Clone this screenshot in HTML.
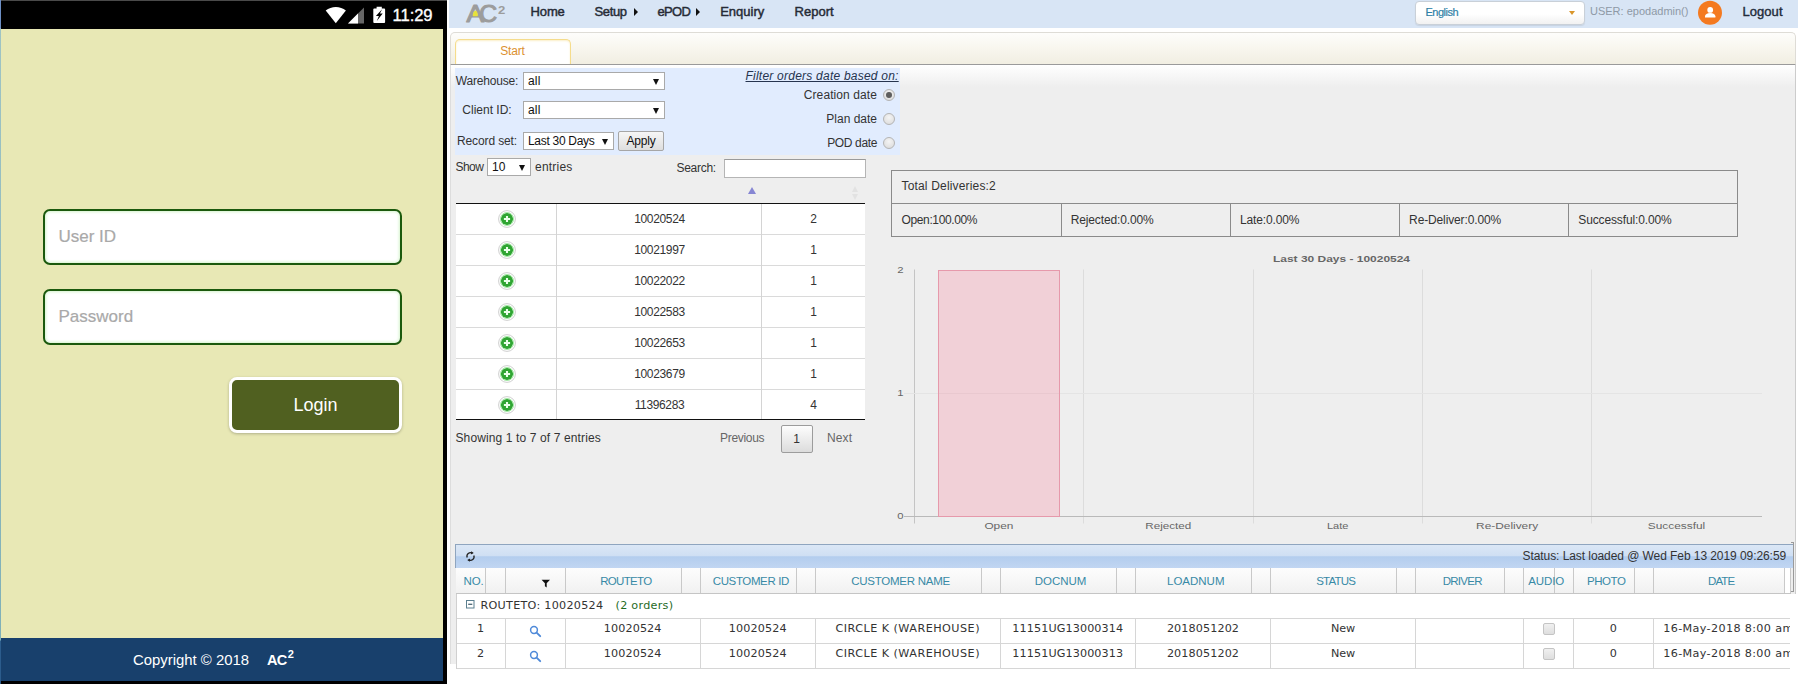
<!DOCTYPE html>
<html lang="en">
<head>
<meta charset="utf-8">
<title>AC2 ePOD</title>
<style>
html,body{margin:0;padding:0}
button{margin:0;padding:0;font-family:inherit;box-sizing:content-box;display:block;cursor:pointer;outline:0}
body{width:1799px;height:684px;position:relative;overflow:hidden;background:#fff;font-family:"Liberation Sans",sans-serif;color:#333}
.abs,.t{position:absolute}
.t{white-space:nowrap;line-height:14px;font-size:12px;letter-spacing:0;color:#333}
/* ---------- mobile panel ---------- */
#mob{position:absolute;left:0;top:0;width:447px;height:684px;background:#000;overflow:hidden}
#mob .screen{position:absolute;left:1px;top:28.5px;width:442.1px;height:609px;background:#e8e8b5}
#mob .ledge{position:absolute;left:0;top:0;width:1px;height:684px;background:linear-gradient(#6d8fc5 0,#6d8fc5 28px,#9fc4c4 29px,#7fb0b8 640px,#2c5c8c 641px)}
#mob .topline{position:absolute;left:0;top:0;width:447px;height:1px;background:#4a4a4a}
#mob .clock{position:absolute;left:392.5px;top:6.3px;font-size:16.6px;line-height:19px;color:#fff;letter-spacing:-.05px;-webkit-text-stroke:.35px #fff}
.inp{position:absolute;left:43px;width:355px;height:52px;border:2px solid #1b590d;border-radius:7px;background:#fff;box-shadow:inset 0 0 3px 1px #d5f3cd}
.inp span{position:absolute;left:13.5px;top:16.4px;-webkit-text-stroke:.2px #a9a9a9;font-size:17px;line-height:20px;color:#a9a9a9}
#login{position:absolute;left:229px;top:377px;width:167px;height:49.5px;border:3px solid #fff;border-radius:8px;background:#506020;box-shadow:0 1px 3px rgba(0,0,0,.25);color:#fff;font-size:18px;line-height:50.5px;text-align:center}
#foot{position:absolute;left:1px;top:637.5px;width:441.7px;height:43px;background:#18406c}
#foot .c{position:absolute;left:132px;top:13px;font-size:14.9px;line-height:18px;color:#fff;white-space:nowrap}
#foot .b{position:absolute;left:266px;top:13px;font-size:14.5px;line-height:18px;color:#fff;font-weight:bold;white-space:nowrap;letter-spacing:-.6px}
#foot .b sup{font-size:11px;line-height:0;position:relative;top:-1px;vertical-align:super;letter-spacing:0;margin-left:1px}

/* ---------- web app ---------- */
#web{position:absolute;left:447px;top:0;width:1352px;height:684px;background:#fff;overflow:hidden}
#web .in{position:absolute;left:-447px;top:0;width:1799px;height:684px}
#nav{position:absolute;left:449px;top:0;width:1349px;height:27.5px;background:#d8e5f5}
.nv{position:absolute;top:4px;font-size:13px;line-height:16px;font-weight:normal;color:#262b36;-webkit-text-stroke:.45px #262b36;white-space:nowrap;letter-spacing:0}
.tri{position:absolute;width:0;height:0;border-left:4.5px solid #111;border-top:4px solid transparent;border-bottom:4px solid transparent}
#lang{position:absolute;left:1414.5px;top:.8px;width:168px;height:22px;border:1px solid #c9d0d8;border-radius:4px;background:linear-gradient(#fff 0,#fff 55%,#f1f1f1 100%);box-shadow:0 1px 1px rgba(0,0,0,.08)}
#lang span{position:absolute;left:10px;top:3px;font-size:11px;line-height:14px;color:#2e7fa6;letter-spacing:-.5px;-webkit-text-stroke:.2px #2e7fa6}
#lang i{position:absolute;left:153px;top:9.7px;width:0;height:0;border-top:4px solid #d9962b;border-left:3.7px solid transparent;border-right:3.7px solid transparent}
#usr{position:absolute;left:1590px;top:5px;font-size:11px;line-height:13px;color:#8e99a6;white-space:nowrap;letter-spacing:0}
#tabs{position:absolute;left:449.5px;top:31.8px;width:1344.5px;height:31.4px;border:1px solid #dedcd6;border-bottom:1px solid #9a9a9a;border-radius:5px 5px 0 0;background:linear-gradient(#fdfdfb 0,#f8f6ee 50%,#f1eee2 100%);box-sizing:content-box}
#tab1{position:absolute;left:454.5px;top:39px;width:114px;height:24px;border:1px solid #f5dc8c;border-bottom:0;border-radius:5px 5px 0 0;background:#fff;box-shadow:inset 0 1px 2px #fbefc8}
#tab1 span{position:absolute;left:0;width:114px;top:3.5px;text-align:center;font-size:12px;line-height:14px;color:#dc9130;letter-spacing:-.15px}
#panel{position:absolute;left:450px;top:65px;width:1344px;height:598.5px;border-left:1px solid #ddd;border-right:1px solid #ccc;background:linear-gradient(#fff 0,#eee 22px,#eee 100%)}

/* filter area */
#filt{position:absolute;left:454.5px;top:68px;width:445px;height:86.5px;background:#e1ecfe}
.sel{position:absolute;height:16px;border:1px solid #a9a9a9;background:#fff;box-sizing:content-box}
.sel span{position:absolute;left:4px;top:1px;font-size:12px;line-height:14px;color:#111;white-space:nowrap;letter-spacing:.2px}
.sel i{position:absolute;right:5px;top:5.5px;width:0;height:0;border-top:6px solid #111;border-left:3.5px solid transparent;border-right:3.5px solid transparent}
#apply{position:absolute;left:618px;top:131px;width:44px;height:18px;border:1px solid #a6a6a6;border-radius:2px;background:linear-gradient(#f6f6f6,#dedede);box-sizing:content-box}
#apply span{position:absolute;left:0;width:44px;text-align:center;top:2px;font-size:12px;line-height:14px;color:#111;letter-spacing:-.23px}
.rad{position:absolute;width:10px;height:10px;border:1px solid #b4b4b4;border-radius:50%;background:radial-gradient(circle at 50% 35%,#f4f4f4,#d9d9d9);box-sizing:content-box}
.rad.on:after{content:"";position:absolute;left:2.1px;top:2.1px;width:5.8px;height:5.8px;border-radius:50%;background:#5e5e5e}
#srch{position:absolute;left:724px;top:158.5px;width:140px;height:17.5px;border:1px solid #b5b5b5;border-top-color:#9a9a9a;background:#fff;box-sizing:content-box}
/* left table */
#dt{position:absolute;left:456px;top:202.6px;width:409px;height:215.8px;background:#fff;border-top:1.4px solid #111;border-bottom:1.4px solid #111;box-sizing:content-box}
#dt .r{position:absolute;left:0;width:409px;height:0;border-top:1px solid #dadada}
#dt .v{position:absolute;top:0;height:215.8px;width:0;border-left:1px solid #d4d4d4}
#dt .n{position:absolute;font-size:12px;line-height:14px;color:#333;letter-spacing:-.35px;text-align:center}
.plus{position:absolute;width:18px;height:18px}
#pg1{position:absolute;left:780.5px;top:424.5px;width:30px;height:26px;border:1px solid #9c9c9c;border-radius:2px;background:linear-gradient(#fdfdfd,#dcdcdc);box-sizing:content-box}

/* stats + chart */
#st{position:absolute;left:891px;top:170px;width:845px;height:64.7px;border:1px solid #8a8a8a;box-sizing:content-box}
#st .h{position:absolute;left:0;top:32px;width:845px;height:0;border-top:1px solid #8a8a8a}
#st .v{position:absolute;top:32px;height:32.7px;width:0;border-left:1px solid #8a8a8a}
#st span{position:absolute;font-size:12px;line-height:14px;color:#333;white-space:nowrap}

/* grid */
#gtb{position:absolute;left:455px;top:544px;width:1336.5px;height:23px;border:1px solid #8fa5bf;border-bottom:0;background:linear-gradient(#dbe7f6 0,#cfdff3 47%,#b3cdee 51%,#c1d6f2 100%);box-sizing:content-box}
#ghd{position:absolute;left:455.5px;top:568px;width:1335px;height:24.6px;background:linear-gradient(#fdfdfd,#f1f1f1);border-bottom:1px solid #c5c5c5;overflow:hidden}
#ghd u{position:absolute;left:1329.5px;top:0;width:5px;height:25px;background:#fff;border-right:1px solid #c9c9c9}
#ghd i{position:absolute;top:0;height:25px;width:0;border-left:1px solid #c9c9c9}
#ghd span{position:absolute;top:5.5px;font-size:11.5px;line-height:14px;color:#388aa6;white-space:nowrap;text-align:center;letter-spacing:.1px}
#gbd{position:absolute;left:455.5px;top:593.6px;width:1339px;height:75px;background:#fff;border-left:1px solid #d0d0d0;overflow:hidden;font-family:"DejaVu Sans","Liberation Sans",sans-serif}
#gbd i{position:absolute;top:24.5px;height:51px;width:0;border-left:1px solid #d6d6d6}
#gbd b{position:absolute;left:0;width:1334.5px;height:0;border-top:1px solid #d6d6d6}
#gbd span{position:absolute;font-size:11.2px;line-height:14px;color:#333;white-space:nowrap;text-align:center;font-weight:normal;letter-spacing:.1px}
.cb{position:absolute;width:10px;height:10px;border:1px solid #c4c4c4;border-radius:2px;background:linear-gradient(#f0f0f0,#dedede);box-sizing:content-box}
</style>
</head>
<body>
<!-- ================= MOBILE LOGIN ================= -->
<div id="mob">
  <div class="screen"></div>
  <div class="topline"></div>
  <div class="ledge"></div>
  <svg class="abs" style="left:320px;top:2px" width="70" height="26" viewBox="320 2 70 26">
    <!-- wifi -->
    <path d="M335.8 23.2 L325.7 10.6 A16.2 16.2 0 0 1 345.9 10.6 Z" fill="#fff"/>
    <!-- signal -->
    <path d="M348 23.5 L364 7.5 L364 23.5 Z" fill="#666"/>
    <path d="M348 23.5 L358 13.5 L358 23.5 Z" fill="#fff"/>
    <!-- battery -->
    <path d="M376.6 6.7 h5.2 v1.7 h2.4 a.9 .9 0 0 1 .9 .9 v12.8 a.9 .9 0 0 1 -.9 .9 h-10 a.9 .9 0 0 1 -.9 -.9 v-12.8 a.9 .9 0 0 1 .9 -.9 h2.4 Z" fill="#fff"/>
    <path d="M382.1 9.3 L375.9 16.1 H378.9 L376.8 21 L382.7 13.6 H379.9 Z" fill="#000"/>
  </svg>
  <div class="clock">11:29</div>
  <div class="inp" style="top:209px"><span>User ID</span></div>
  <div class="inp" style="top:288.5px"><span>Password</span></div>
  <button id="login" type="button">Login</button>
  <div id="foot"><span class="c">Copyright © 2018</span><span class="b">AC<sup>2</sup></span></div>
</div>

<!-- ================= WEB APP ================= -->
<div id="web"><div class="in">
  <div id="nav"></div>
  <svg class="abs" style="left:462px;top:1.8px" width="50" height="25" viewBox="462 1 50 25" font-family="Liberation Sans, sans-serif">
    <text x="466.6" y="21.2" font-size="23.6" fill="#9c9c9c" stroke="#9c9c9c" stroke-width="1.1" stroke-linejoin="round" textLength="17.6" lengthAdjust="spacingAndGlyphs">A</text>
    <text x="479.2" y="21.2" font-size="23" fill="#9c9c9c" stroke="#9c9c9c" stroke-width="1" stroke-linejoin="round" textLength="18" lengthAdjust="spacingAndGlyphs">C</text>
    <path d="M475.3 9.4c1.3 0 2.5 2.3 2.6 5.3c0 .5-.5 .6-2.6 .6s-2.6-.1-2.6-.6c.1-3 1.3-5.3 2.6-5.3z" fill="#e7e23a"/>
    <text x="498" y="13.4" font-size="11.6" font-weight="bold" fill="#9c9c9c" textLength="7.3" lengthAdjust="spacingAndGlyphs">2</text>
  </svg>
  <span class="nv" style="left:530.6px;letter-spacing:-.15px">Home</span>
  <span class="nv" style="left:594.6px;letter-spacing:-.4px">Setup</span><i class="tri" style="left:633.5px;top:8px"></i>
  <span class="nv" style="left:657.4px;letter-spacing:-.65px">ePOD</span><i class="tri" style="left:696px;top:8px"></i>
  <span class="nv" style="left:720.2px">Enquiry</span>
  <span class="nv" style="left:794.6px">Report</span>
  <div id="lang"><span>English</span><i></i></div>
  <span id="usr">USER: epodadmin()</span>
  <svg class="abs" style="left:1697px;top:0" width="26" height="26" viewBox="1697 0 26 26">
    <circle cx="1710" cy="12.8" r="12" fill="#f47a20"/>
    <circle cx="1710.2" cy="9.9" r="2.9" fill="#fff"/>
    <path d="M1705 17.6 v-1.3 c0-2 2.2-3.3 5.2-3.3 s5.2 1.3 5.2 3.3 v1.3 Z" fill="#fff"/>
  </svg>
  <span class="nv" style="left:1742.5px;font-weight:normal;letter-spacing:.05px;-webkit-text-stroke:.4px #222b3a;color:#222b3a">Logout</span>
  <div id="tabs"></div>
  <div id="tab1"><span>Start</span></div>
  <div id="panel"></div>

  <div id="filt"></div>
  <span class="t" style="left:455px;width:64px;text-align:center;top:74px;letter-spacing:-0.2px">Warehouse:</span>
  <span class="t" style="left:455px;width:64px;text-align:center;top:103px;letter-spacing:0px">Client ID:</span>
  <span class="t" style="left:455px;width:64px;text-align:center;top:134px;letter-spacing:-0.12px">Record set:</span>
  <div class="sel" style="left:523px;top:72px;width:140px"><span>all</span><i></i></div>
  <div class="sel" style="left:523px;top:101px;width:140px"><span>all</span><i></i></div>
  <div class="sel" style="left:523px;top:132px;width:89px"><span style="letter-spacing:-.3px">Last 30 Days</span><i></i></div>
  <button id="apply" type="button"><span>Apply</span></button>
  <span class="t" style="left:745.5px;top:68.5px;font-style:italic;text-decoration:underline;color:#26344f;letter-spacing:0.23px">Filter orders date based on:</span>
  <span class="t" style="left:777px;width:100px;text-align:right;top:88px;letter-spacing:0.09px">Creation date</span>
  <span class="t" style="left:777px;width:100px;text-align:right;top:112px;letter-spacing:0px">Plan date</span>
  <span class="t" style="left:777px;width:100px;text-align:right;top:136px;letter-spacing:-0.36px">POD date</span>
  <div class="rad on" style="left:883px;top:89.2px"></div>
  <div class="rad" style="left:883px;top:113.2px"></div>
  <div class="rad" style="left:883px;top:137.3px"></div>
  <span class="t" style="left:455.5px;top:160px;letter-spacing:-0.55px">Show</span>
  <div class="sel" style="left:487px;top:158px;width:42px"><span>10</span><i></i></div>
  <span class="t" style="left:535px;top:160px;letter-spacing:0.22px">entries</span>
  <span class="t" style="left:676.5px;top:161px;letter-spacing:-0.28px">Search:</span>
  <div id="srch"></div>
  <i class="abs" style="left:748px;top:187px;width:0;height:0;border-bottom:7px solid #8686d3;border-left:4.2px solid transparent;border-right:4.2px solid transparent"></i>
  <i class="abs" style="left:852px;top:186px;width:0;height:0;border-bottom:6px solid #e2e2e2;border-left:3.5px solid transparent;border-right:3.5px solid transparent"></i>
  <i class="abs" style="left:852px;top:194px;width:0;height:0;border-top:6px solid #e2e2e2;border-left:3.5px solid transparent;border-right:3.5px solid transparent"></i>
  <div id="dt">
    <svg class="plus" style="left:42px;top:6.8px" viewBox="0 0 18 18"><circle cx="9" cy="9" r="8.4" fill="#fff" stroke="#c9c9c9" stroke-width=".9"/><circle cx="9" cy="9" r="6.1" fill="#2fa532"/><circle cx="9" cy="9" r="6.6" fill="none" stroke="#9fe8a0" stroke-width=".9"/><path d="M9 5.9v6.2M5.9 9h6.2" stroke="#eaffea" stroke-width="2.1"/></svg>
    <span class="n" style="left:101px;width:205px;top:8px">10020524</span><span class="n" style="left:306px;width:103px;top:8px">2</span>
    <div class="r" style="top:30.0px"></div>
    <svg class="plus" style="left:42px;top:37.8px" viewBox="0 0 18 18"><circle cx="9" cy="9" r="8.4" fill="#fff" stroke="#c9c9c9" stroke-width=".9"/><circle cx="9" cy="9" r="6.1" fill="#2fa532"/><circle cx="9" cy="9" r="6.6" fill="none" stroke="#9fe8a0" stroke-width=".9"/><path d="M9 5.9v6.2M5.9 9h6.2" stroke="#eaffea" stroke-width="2.1"/></svg>
    <span class="n" style="left:101px;width:205px;top:39px">10021997</span><span class="n" style="left:306px;width:103px;top:39px">1</span>
    <div class="r" style="top:61.0px"></div>
    <svg class="plus" style="left:42px;top:68.8px" viewBox="0 0 18 18"><circle cx="9" cy="9" r="8.4" fill="#fff" stroke="#c9c9c9" stroke-width=".9"/><circle cx="9" cy="9" r="6.1" fill="#2fa532"/><circle cx="9" cy="9" r="6.6" fill="none" stroke="#9fe8a0" stroke-width=".9"/><path d="M9 5.9v6.2M5.9 9h6.2" stroke="#eaffea" stroke-width="2.1"/></svg>
    <span class="n" style="left:101px;width:205px;top:70px">10022022</span><span class="n" style="left:306px;width:103px;top:70px">1</span>
    <div class="r" style="top:92.0px"></div>
    <svg class="plus" style="left:42px;top:99.8px" viewBox="0 0 18 18"><circle cx="9" cy="9" r="8.4" fill="#fff" stroke="#c9c9c9" stroke-width=".9"/><circle cx="9" cy="9" r="6.1" fill="#2fa532"/><circle cx="9" cy="9" r="6.6" fill="none" stroke="#9fe8a0" stroke-width=".9"/><path d="M9 5.9v6.2M5.9 9h6.2" stroke="#eaffea" stroke-width="2.1"/></svg>
    <span class="n" style="left:101px;width:205px;top:101px">10022583</span><span class="n" style="left:306px;width:103px;top:101px">1</span>
    <div class="r" style="top:123.0px"></div>
    <svg class="plus" style="left:42px;top:130.8px" viewBox="0 0 18 18"><circle cx="9" cy="9" r="8.4" fill="#fff" stroke="#c9c9c9" stroke-width=".9"/><circle cx="9" cy="9" r="6.1" fill="#2fa532"/><circle cx="9" cy="9" r="6.6" fill="none" stroke="#9fe8a0" stroke-width=".9"/><path d="M9 5.9v6.2M5.9 9h6.2" stroke="#eaffea" stroke-width="2.1"/></svg>
    <span class="n" style="left:101px;width:205px;top:132px">10022653</span><span class="n" style="left:306px;width:103px;top:132px">1</span>
    <div class="r" style="top:154.0px"></div>
    <svg class="plus" style="left:42px;top:161.8px" viewBox="0 0 18 18"><circle cx="9" cy="9" r="8.4" fill="#fff" stroke="#c9c9c9" stroke-width=".9"/><circle cx="9" cy="9" r="6.1" fill="#2fa532"/><circle cx="9" cy="9" r="6.6" fill="none" stroke="#9fe8a0" stroke-width=".9"/><path d="M9 5.9v6.2M5.9 9h6.2" stroke="#eaffea" stroke-width="2.1"/></svg>
    <span class="n" style="left:101px;width:205px;top:163px">10023679</span><span class="n" style="left:306px;width:103px;top:163px">1</span>
    <div class="r" style="top:185.0px"></div>
    <svg class="plus" style="left:42px;top:192.8px" viewBox="0 0 18 18"><circle cx="9" cy="9" r="8.4" fill="#fff" stroke="#c9c9c9" stroke-width=".9"/><circle cx="9" cy="9" r="6.1" fill="#2fa532"/><circle cx="9" cy="9" r="6.6" fill="none" stroke="#9fe8a0" stroke-width=".9"/><path d="M9 5.9v6.2M5.9 9h6.2" stroke="#eaffea" stroke-width="2.1"/></svg>
    <span class="n" style="left:101px;width:205px;top:194px">11396283</span><span class="n" style="left:306px;width:103px;top:194px">4</span>
    <div class="v" style="left:100px"></div><div class="v" style="left:305px"></div>
  </div>
  <div id="st"><div class="h"></div><div class="v" style="left:168.7px"></div><div class="v" style="left:337.9px"></div><div class="v" style="left:507.1px"></div><div class="v" style="left:676.3px"></div><span style="left:9.5px;top:8.2px;letter-spacing:.17px">Total Deliveries:2</span><span style="left:9.5px;top:41.6px;letter-spacing:-0.37px">Open:100.00%</span><span style="left:178.7px;top:41.6px;letter-spacing:-0.13px">Rejected:0.00%</span><span style="left:347.9px;top:41.6px;letter-spacing:-0.13px">Late:0.00%</span><span style="left:517.1px;top:41.6px;letter-spacing:-0.13px">Re-Deliver:0.00%</span><span style="left:686.3px;top:41.6px;letter-spacing:-0.13px">Successful:0.00%</span></div>
  <svg class="abs" style="left:880px;top:245px" width="900" height="295" viewBox="880 245 900 295" font-family="Liberation Sans, sans-serif">
    <line x1="914.5" y1="269.5" x2="914.5" y2="523.5" stroke="#c4c4c4" stroke-width="1"/>
    <line x1="1083.5" y1="269.5" x2="1083.5" y2="523.5" stroke="#dcdcdc" stroke-width="1"/>
    <line x1="1253.5" y1="269.5" x2="1253.5" y2="523.5" stroke="#dcdcdc" stroke-width="1"/>
    <line x1="1422.5" y1="269.5" x2="1422.5" y2="523.5" stroke="#dcdcdc" stroke-width="1"/>
    <line x1="1591.5" y1="269.5" x2="1591.5" y2="523.5" stroke="#dcdcdc" stroke-width="1"/>
    <line x1="904" y1="393.5" x2="1762" y2="393.5" stroke="#e4e4e4" stroke-width="1"/>
    <line x1="904" y1="516.5" x2="1762" y2="516.5" stroke="#b9b9b9" stroke-width="1"/>
    <rect x="938.5" y="270.5" width="121" height="246" fill="rgba(255,99,132,.21)" stroke="#e699ab" stroke-width="1"/>
    <text x="1341.5" y="262.3" text-anchor="middle" font-size="9.6" font-weight="bold" fill="#666" textLength="137" lengthAdjust="spacingAndGlyphs">Last 30 Days - 10020524</text>
    <text x="903.5" y="272.5" text-anchor="end" font-size="9.6" fill="#666" textLength="6.3" lengthAdjust="spacingAndGlyphs">2</text>
    <text x="903.5" y="395.5" text-anchor="end" font-size="9.6" fill="#666" textLength="6.3" lengthAdjust="spacingAndGlyphs">1</text>
    <text x="903.5" y="518.5" text-anchor="end" font-size="9.6" fill="#666" textLength="6.3" lengthAdjust="spacingAndGlyphs">0</text>
    <text x="998.9" y="528.9" text-anchor="middle" font-size="9.6" fill="#666" textLength="29" lengthAdjust="spacingAndGlyphs">Open</text>
    <text x="1168.3" y="528.9" text-anchor="middle" font-size="9.6" fill="#666" textLength="46" lengthAdjust="spacingAndGlyphs">Rejected</text>
    <text x="1337.7" y="528.9" text-anchor="middle" font-size="9.6" fill="#666" textLength="21.5" lengthAdjust="spacingAndGlyphs">Late</text>
    <text x="1507.1" y="528.9" text-anchor="middle" font-size="9.6" fill="#666" textLength="62" lengthAdjust="spacingAndGlyphs">Re-Delivery</text>
    <text x="1676.5" y="528.9" text-anchor="middle" font-size="9.6" fill="#666" textLength="57.5" lengthAdjust="spacingAndGlyphs">Successful</text>
  </svg>
  <span class="t" style="left:455.5px;top:431px;letter-spacing:0.12px">Showing 1 to 7 of 7 entries</span>
  <span class="t" style="left:720px;top:431px;color:#666;letter-spacing:-0.3px">Previous</span>
  <div id="pg1"><span class="t" style="left:0;width:30px;text-align:center;top:6px">1</span></div>
  <span class="t" style="left:827px;top:431px;color:#666;letter-spacing:0.1px">Next</span>
  <div id="gtb"></div>
  <div class="abs" style="left:1791px;top:541.5px;width:2px;height:48.5px;border:1px solid #9a9a9a;border-left:0;box-sizing:content-box"></div>
  <svg class="abs" style="left:464px;top:550px" width="13" height="13" viewBox="0 0 13 13"><path d="M3.2 7.6A3.6 3.6 0 0 1 8.4 3.2M9.8 5.4A3.6 3.6 0 0 1 4.6 9.8" fill="none" stroke="#222" stroke-width="1.3"/><path d="M7.2 1.2l2.6 1.9-2.9 1.5zM5.8 11.8l-2.6-1.9 2.9-1.5z" fill="#222"/></svg>
  <span class="t" style="left:1522.5px;top:549px;letter-spacing:-.07px">Status: Last loaded @ Wed Feb 13 2019 09:26:59</span>
  <div id="ghd"><u></u><i style="left:29.9px"></i><i style="left:49.6px"></i><i style="left:109.2px"></i><i style="left:225.6px"></i><i style="left:244.2px"></i><i style="left:340.7px"></i><i style="left:359.3px"></i><i style="left:525.5px"></i><i style="left:544.1px"></i><i style="left:660.3px"></i><i style="left:679.5px"></i><i style="left:795.6px"></i><i style="left:814.5px"></i><i style="left:940.3px"></i><i style="left:959.5px"></i><i style="left:1048.8px"></i><i style="left:1067.3px"></i><i style="left:1098.8px"></i><i style="left:1117.4px"></i><i style="left:1178.5px"></i><i style="left:1197.3px"></i><i style="left:1328.9px"></i><span style="left:0.0px;width:36.0px;letter-spacing:-0.1px">NO.</span><span style="left:109.7px;width:121.4px;letter-spacing:-0.66px">ROUTETO</span><span style="left:244.7px;width:101.3px;letter-spacing:-0.37px">CUSTOMER ID</span><span style="left:359.8px;width:170.7px;letter-spacing:-0.25px">CUSTOMER NAME</span><span style="left:544.6px;width:120.9px;letter-spacing:-0.05px">DOCNUM</span><span style="left:680.0px;width:120.5px;letter-spacing:0px">LOADNUM</span><span style="left:815.0px;width:130.5px;letter-spacing:-0.77px">STATUS</span><span style="left:960.0px;width:93.5px;letter-spacing:-0.73px">DRIVER</span><span style="left:1067.8px;width:45.7px;letter-spacing:-0.08px">AUDIO</span><span style="left:1117.9px;width:65.6px;letter-spacing:-0.44px">PHOTO</span><span style="left:1197.8px;width:135.7px;letter-spacing:-0.87px">DATE</span><svg class="abs" style="left:85.4px;top:10.5px" width="10" height="10" viewBox="0 0 10 10"><path d="M.6 .8h8.4L5.7 4.3v4.2L3.9 7.2V4.3z" fill="#111"/></svg></div>
  <div id="gbd"><i style="left:48.6px"></i><i style="left:108.2px"></i><i style="left:243.2px"></i><i style="left:358.3px"></i><i style="left:543.1px"></i><i style="left:678.5px"></i><i style="left:813.5px"></i><i style="left:958.5px"></i><i style="left:1066.3px"></i><i style="left:1116.4px"></i><i style="left:1196.3px"></i><b style="top:24.3px"></b><b style="top:49.5px"></b><b style="top:74.4px"></b><svg class="abs" style="left:9.7px;top:6.7px" width="9" height="9" viewBox="0 0 9 9"><rect x=".5" y=".5" width="7.5" height="7.5" fill="#fff" stroke="#5b7f8f" stroke-width="1"/><path d="M2.2 4.25h4.1" stroke="#2b4b5b" stroke-width="1.1"/></svg><span style="left:24px;top:5.2px;letter-spacing:.26px">ROUTETO: 10020524</span><span style="left:159px;top:5.2px;color:#1f6b1f;letter-spacing:.27px">(2 orders)</span><span style="left:-1.0px;width:50.1px;top:28.4px">1</span><svg class="abs" style="left:72.6px;top:31.2px" width="13" height="13" viewBox="0 0 13 13"><circle cx="5" cy="5" r="3.4" fill="none" stroke="#4f8ad9" stroke-width="1.5"/><path d="M7.6 7.6l3.6 3.6" stroke="#4f8ad9" stroke-width="1.9" stroke-linecap="round"/></svg><span style="left:108.7px;width:135.0px;top:28.4px">10020524</span><span style="left:243.7px;width:115.1px;top:28.4px">10020524</span><span style="left:358.8px;width:184.8px;top:28.4px;letter-spacing:.47px">CIRCLE K (WAREHOUSE)</span><span style="left:543.6px;width:135.4px;top:28.4px">11151UG13000314</span><span style="left:679.0px;width:135.0px;top:28.4px">2018051202</span><span style="left:814.0px;width:145.0px;top:28.4px;letter-spacing:-.1px">New</span><div class="cb" style="left:1086.5px;top:29.2px"></div><span style="left:1116.9px;width:79.9px;top:28.4px">0</span><span style="left:1206.8px;top:28.4px;text-align:left;letter-spacing:.35px">16-May-2018 8:00 am</span><span style="left:-1.0px;width:50.1px;top:53.4px">2</span><svg class="abs" style="left:72.6px;top:56.2px" width="13" height="13" viewBox="0 0 13 13"><circle cx="5" cy="5" r="3.4" fill="none" stroke="#4f8ad9" stroke-width="1.5"/><path d="M7.6 7.6l3.6 3.6" stroke="#4f8ad9" stroke-width="1.9" stroke-linecap="round"/></svg><span style="left:108.7px;width:135.0px;top:53.4px">10020524</span><span style="left:243.7px;width:115.1px;top:53.4px">10020524</span><span style="left:358.8px;width:184.8px;top:53.4px;letter-spacing:.47px">CIRCLE K (WAREHOUSE)</span><span style="left:543.6px;width:135.4px;top:53.4px">11151UG13000313</span><span style="left:679.0px;width:135.0px;top:53.4px">2018051202</span><span style="left:814.0px;width:145.0px;top:53.4px;letter-spacing:-.1px">New</span><div class="cb" style="left:1086.5px;top:54.2px"></div><span style="left:1116.9px;width:79.9px;top:53.4px">0</span><span style="left:1206.8px;top:53.4px;text-align:left;letter-spacing:.35px">16-May-2018 8:00 am</span><em style="position:absolute;left:1333.5px;top:0;width:7px;height:75px;background:#fff"></em></div>
</div></div>
</body>
</html>
